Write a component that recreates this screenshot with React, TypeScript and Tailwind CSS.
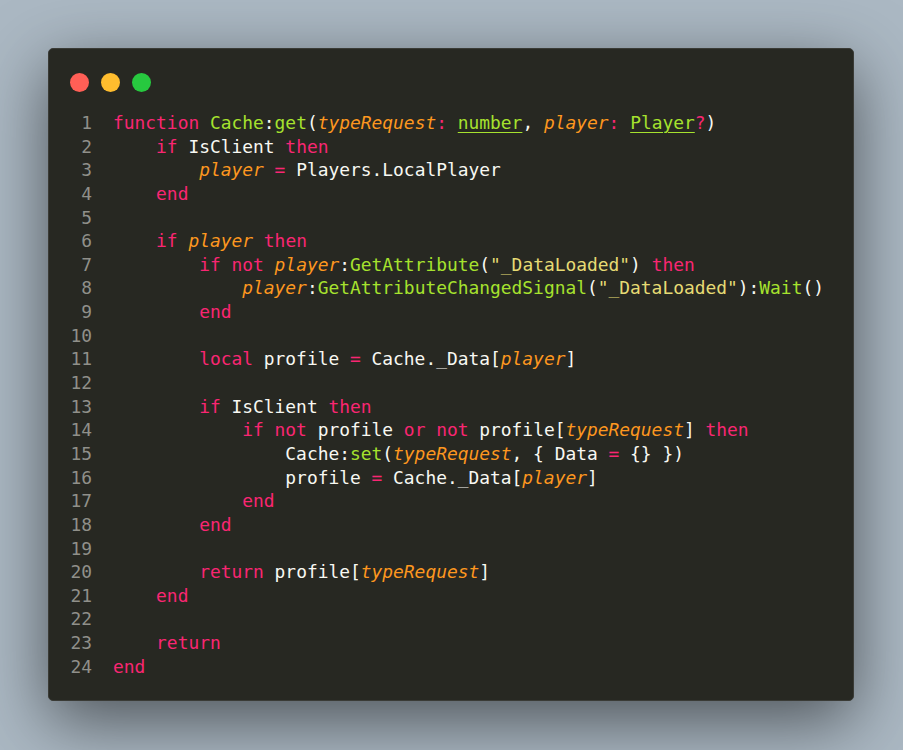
type Tok = [string, string?];

const K = "text-[#f92672]";
const F = "text-[#a6e22e]";
const P = "text-[#fd971f] italic";
const S = "text-[#e6db74]";
const T = "text-[#a6e22e] underline decoration-1 underline-offset-[3px]";

const lines: Tok[][] = [
  [["function", K], [" "], ["Cache", F], [":"], ["get", F], ["("], ["typeRequest", P], [":", K], [" "], ["number", T], [", "], ["player", P], [":", K], [" "], ["Player", T], ["?", K], [")"]],
  [["    "], ["if", K], [" IsClient "], ["then", K]],
  [["        "], ["player", P], [" "], ["=", K], [" Players.LocalPlayer"]],
  [["    "], ["end", K]],
  [],
  [["    "], ["if", K], [" "], ["player", P], [" "], ["then", K]],
  [["        "], ["if not", K], [" "], ["player", P], [":"], ["GetAttribute", F], ["("], ['"_DataLoaded"', S], [") "], ["then", K]],
  [["            "], ["player", P], [":"], ["GetAttributeChangedSignal", F], ["("], ['"_DataLoaded"', S], ["):"], ["Wait", F], ["()"]],
  [["        "], ["end", K]],
  [],
  [["        "], ["local", K], [" profile "], ["=", K], [" Cache._Data["], ["player", P], ["]"]],
  [],
  [["        "], ["if", K], [" IsClient "], ["then", K]],
  [["            "], ["if not", K], [" profile "], ["or not", K], [" profile["], ["typeRequest", P], ["] "], ["then", K]],
  [["                Cache:"], ["set", F], ["("], ["typeRequest", P], [", { Data "], ["=", K], [" {} })"]],
  [["                profile "], ["=", K], [" Cache._Data["], ["player", P], ["]"]],
  [["            "], ["end", K]],
  [["        "], ["end", K]],
  [],
  [["        "], ["return", K], [" profile["], ["typeRequest", P], ["]"]],
  [["    "], ["end", K]],
  [],
  [["    "], ["return", K]],
  [["end", K]],
];

function Dots() {
  return (
    <div className="flex gap-x-[12px]">
      <span className="h-[19px] w-[19px] rounded-full bg-[#ff5f56]" />
      <span className="h-[19px] w-[19px] rounded-full bg-[#ffbd2e]" />
      <span className="h-[19px] w-[19px] rounded-full bg-[#27c93f]" />
    </div>
  );
}

export default function App() {
  return (
    <div className="min-h-[750px] w-[903px] bg-[#abb8c3] pt-[48px] pl-[48px]">
      <div className="w-[806px] h-[653px] rounded-[5px] border border-[#3a3b36] bg-[#272822] shadow-[0_20px_68px_rgba(0,0,0,0.55)] pt-[24px] pl-[21px]">
        <Dots />
        <div
          className="mt-[19px] text-[17.9px] leading-[23.65px] text-[#f8f8f2]"
          style={{ fontFamily: '"DejaVu Sans Mono", "Liberation Mono", monospace' }}
        >
          {lines.map((ln, i) => (
            <div key={i} className="flex h-[23.65px]">
              <span className="w-[22px] text-right text-[#90908a]">{i + 1}</span>
              <span className="ml-[21px] whitespace-pre">
                {ln.map(([t, c], j) => (
                  <span key={j} className={c}>
                    {t}
                  </span>
                ))}
              </span>
            </div>
          ))}
        </div>
      </div>
    </div>
  );
}
